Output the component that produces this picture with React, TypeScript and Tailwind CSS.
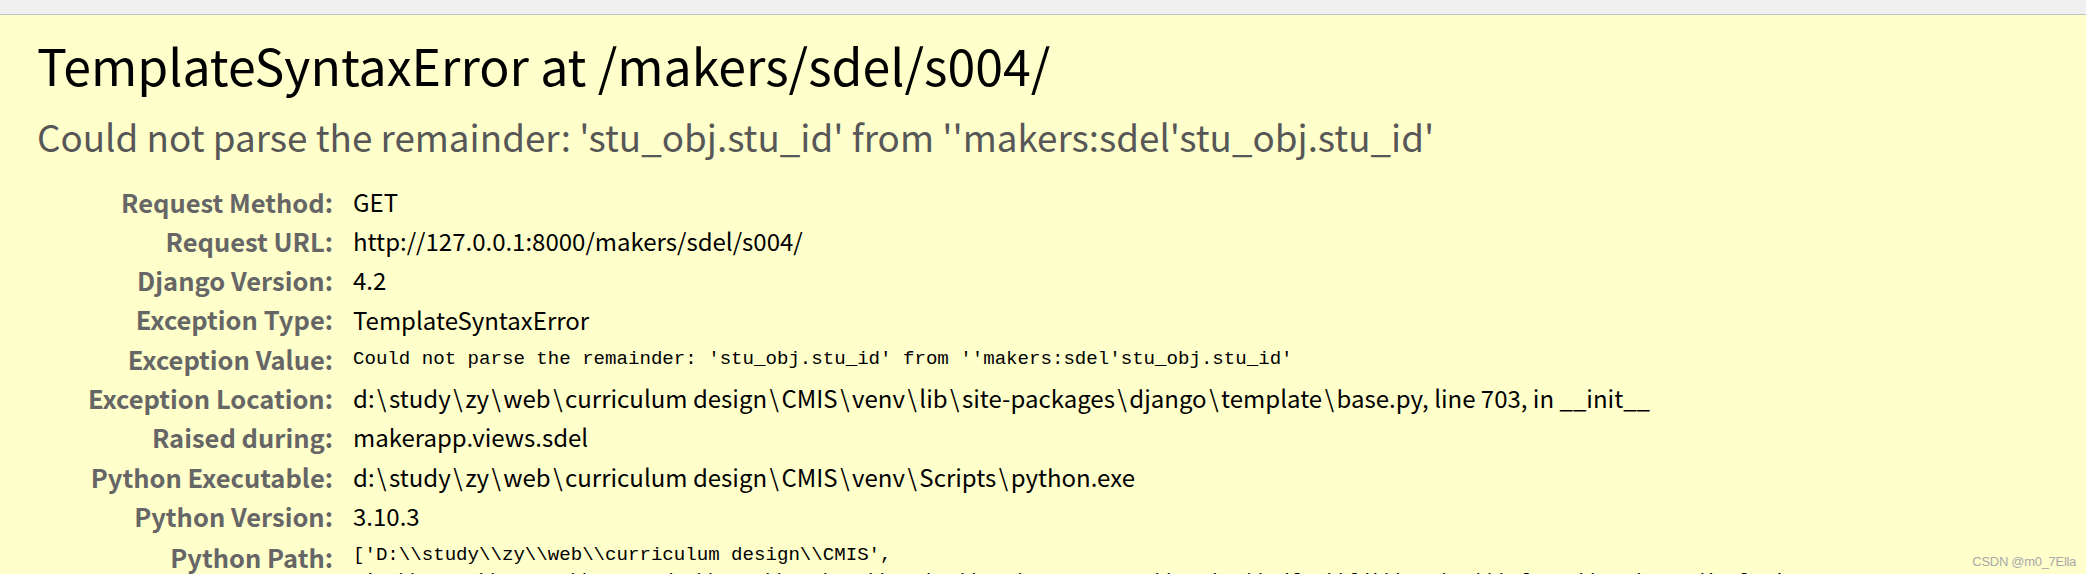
import React from "react";

const rows: { label: string; value: string; mono?: boolean }[] = [
  { label: "Request Method:", value: "GET" },
  { label: "Request URL:", value: "http://127.0.0.1:8000/makers/sdel/s004/" },
  { label: "Django Version:", value: "4.2" },
  { label: "Exception Type:", value: "TemplateSyntaxError" },
  {
    label: "Exception Value:",
    value: "Could not parse the remainder: 'stu_obj.stu_id' from ''makers:sdel'stu_obj.stu_id'",
    mono: true,
  },
  {
    label: "Exception Location:",
    value:
      "d:\\study\\zy\\web\\curriculum design\\CMIS\\venv\\lib\\site-packages\\django\\template\\base.py, line 703, in __init__",
  },
  { label: "Raised during:", value: "makerapp.views.sdel" },
  {
    label: "Python Executable:",
    value: "d:\\study\\zy\\web\\curriculum design\\CMIS\\venv\\Scripts\\python.exe",
  },
  { label: "Python Version:", value: "3.10.3" },
];

const sans = "font-['Noto_Sans_CJK_SC','Noto_Sans',sans-serif]";

// the original font draws backslashes a good deal wider
function Path({ text }: { text: string }) {
  const parts = text.split("\\");
  return (
    <>
      {parts.map((p, i) => (
        <React.Fragment key={i}>
          {i > 0 && <span className="px-[2.5px]">\</span>}
          {p}
        </React.Fragment>
      ))}
    </>
  );
}

export default function App() {
  return (
    <div className="relative w-[2086px] h-[574px] overflow-hidden bg-[#ffffcc]">
      {/* browser strip above the summary */}
      <div className="h-[15px] bg-[#f0f0f0] border-b border-[#c4c4c4]" />

      <div className={`pl-[37px] ${sans}`}>
        <h1 className="pt-[19px] text-[50px] leading-[60px] font-normal text-black">
          TemplateSyntaxError at /makers/sdel/s004/
        </h1>
        <h2 className="mt-[19px] text-[36.8px] leading-[46px] font-normal text-[#575757]">
          Could not parse the remainder: 'stu_obj.stu_id' from ''makers:sdel'stu_obj.stu_id'
        </h2>

        <table className="mt-[23px] border-collapse">
          <tbody>
            {rows.map((r) => (
              <tr key={r.label} className="h-[39.3px]">
                <th className="w-[316px] pr-[20px] text-right align-middle text-[25.5px] font-bold text-[#666666] whitespace-nowrap">
                  {r.label}
                </th>
                <td
                  className={
                    r.mono
                      ? "align-middle whitespace-pre text-[19.1px] text-black font-['Liberation_Mono',monospace]"
                      : "align-middle whitespace-pre text-[24px] text-black"
                  }
                >
                  {r.mono ? r.value : <Path text={r.value} />}
                </td>
              </tr>
            ))}
            <tr>
              <th className="w-[316px] pr-[20px] pt-[6px] text-right align-top text-[25.5px] leading-[30px] font-bold text-[#666666] whitespace-nowrap">
                Python Path:
              </th>
              <td className="pt-[6px] align-top whitespace-pre text-[19.1px] leading-[26px] text-black font-['Liberation_Mono',monospace]">
                {"['D:\\\\study\\\\zy\\\\web\\\\curriculum design\\\\CMIS',\n 'D:\\\\Users\\\\Lenovo\\\\anaconda3\\\\envs\\\\pycharm\\\\python\\\\python 2022.3.2\\\\python\\\\Files\\\\lib\\\\python\\\\helpers\\\\pycharm_display',"}
              </td>
            </tr>
          </tbody>
        </table>
      </div>

      <div className="absolute right-[10px] bottom-[3px] text-[13px] text-[#a8a8a8] font-['Liberation_Sans',sans-serif] tracking-[-0.3px]">
        CSDN @m0_7Ella
      </div>
    </div>
  );
}
